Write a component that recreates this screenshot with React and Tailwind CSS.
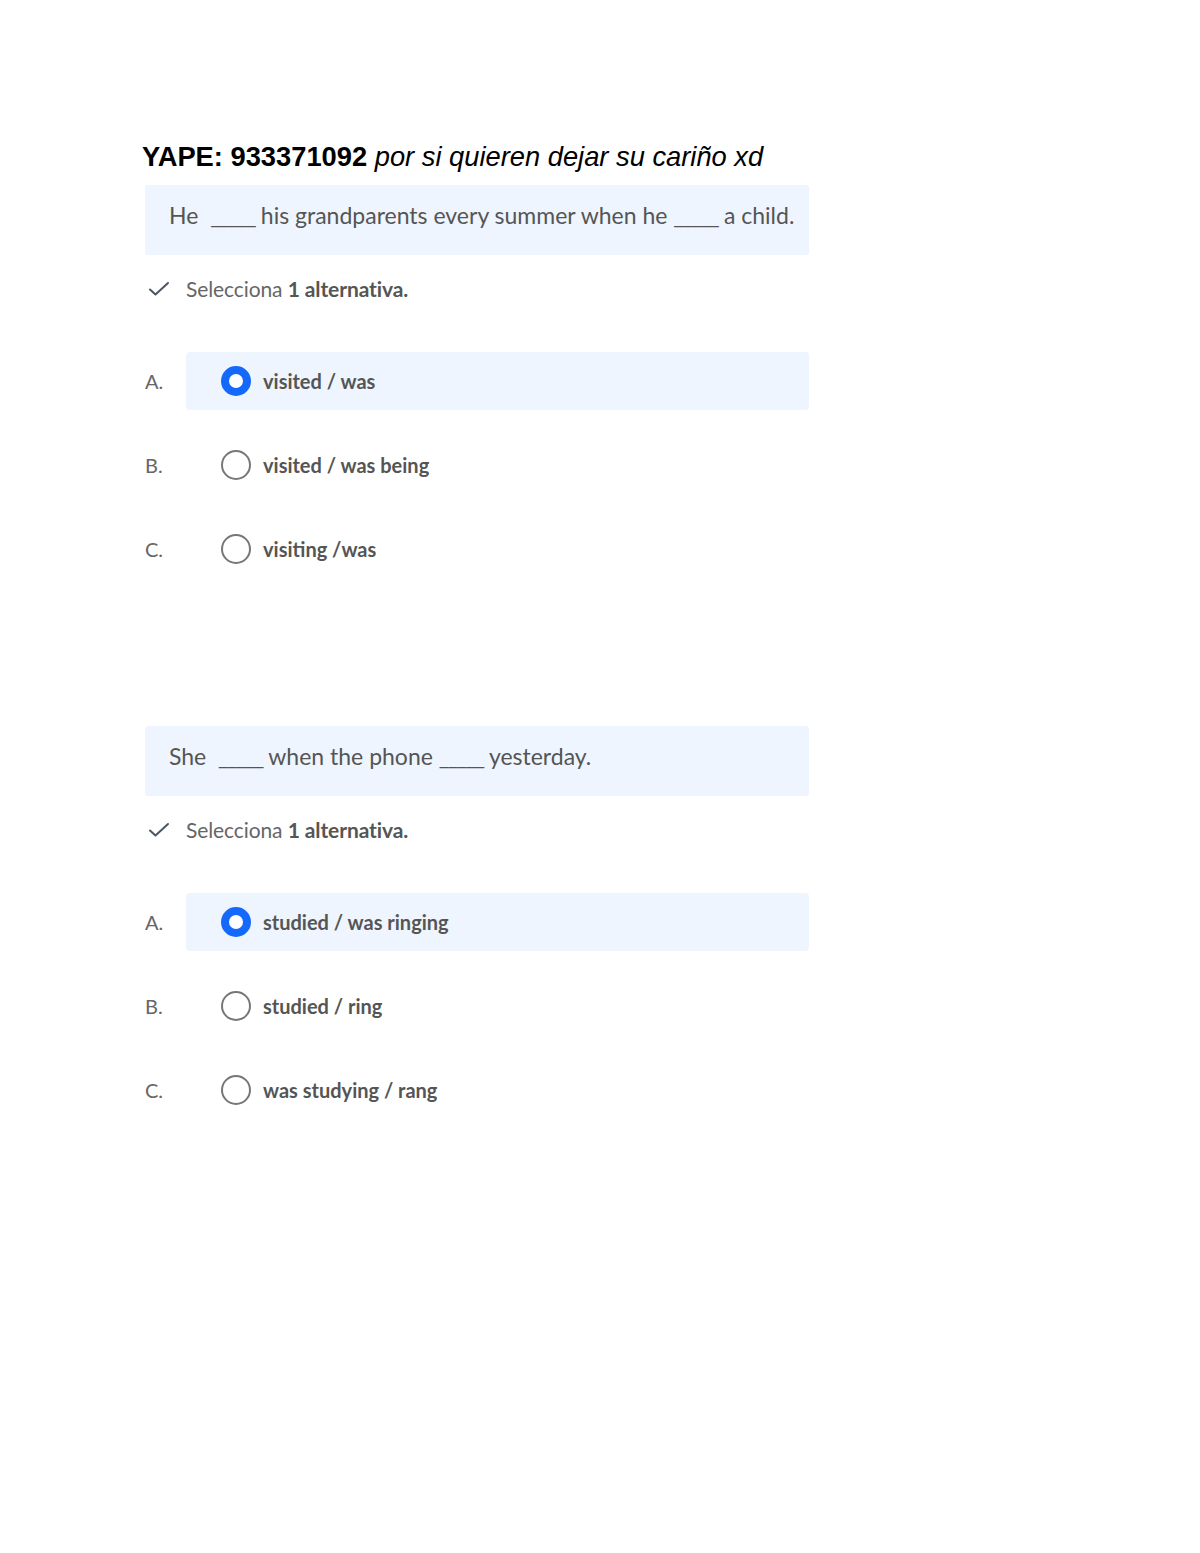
import React from "react";

const questions = [
  {
    parts: ["He  ", " his grandparents every summer when he ", " a child."],
    options: ["visited / was", "visited / was being", "visiting /was"],
    selected: 0,
  },
  {
    parts: ["She  ", " when the phone ", " yesterday."],
    options: ["studied / was ringing", "studied / ring", "was studying / rang"],
    selected: 0,
  },
];

const letters = ["A.", "B.", "C."];

const Check = () => (
  <svg width="22" height="16" viewBox="0 0 22 16" fill="none">
    <path d="M2 8.5l5.5 5L20 2" stroke="#4b5563" strokeWidth="2" strokeLinecap="round" strokeLinejoin="round" />
  </svg>
);

const Blank = () => <span className="tracking-[-1.6px]">_____</span>;

const Question = ({ q }) => (
  <div className="w-[664px]">
    {/* Enunciado */}
    <div className="h-[70px] bg-[#eef5fe] rounded-[3px] flex items-center pl-6 pb-[9px] text-[23px] text-[#555] whitespace-pre">
      <span>
        {q.parts[0]}
        <Blank />
        {q.parts[1]}
        <Blank />
        {q.parts[2]}
      </span>
    </div>

    <div className="flex items-center mt-[22px] h-[24px]">
      <div className="w-[41px] pl-[3px]">
        <Check />
      </div>
      <span className="text-[21px] text-[#666] tracking-[-0.1px]">
        Selecciona <span className="font-bold text-[#555]">1 alternativa.</span>
      </span>
    </div>

    <div className="mt-[51px] flex flex-col gap-[26px]">
      {q.options.map((opt, i) => (
        <div key={opt} className="flex items-center">
          <span className="w-[41px] text-[20px] text-[#666]">{letters[i]}</span>
          <div
            className={`flex-1 h-[58px] rounded-[4px] flex items-center pl-[35px] ${
              q.selected === i ? "bg-[#eef5fe]" : ""
            }`}
          >
            {q.selected === i ? (
              <span className="w-[30px] h-[30px] rounded-full border-[8px] border-[#1469fb] bg-white" />
            ) : (
              <span className="w-[30px] h-[30px] rounded-full border-2 border-[#777]" />
            )}
            <span className="ml-3 text-[20px] font-bold text-[#555]">{opt}</span>
          </div>
        </div>
      ))}
    </div>
  </div>
);

export default function App() {
  return (
    <div className="bg-white min-h-[1553px] pt-[140px] pl-[142px]" style={{ fontFamily: "Lato, 'Open Sans', sans-serif" }}>
      <h1
        className="text-[27.3px] text-black leading-[34px] mb-[11px]"
        style={{ fontFamily: "'Liberation Sans', Arial, sans-serif" }}
      >
        <span className="font-bold">YAPE: 933371092</span> <span className="italic">por si quieren dejar su cariño xd</span>
      </h1>
      <div className="pl-[3px] flex flex-col gap-[148px]">
        {questions.map((q, i) => (
          <Question key={i} q={q} />
        ))}
      </div>
    </div>
  );
}
